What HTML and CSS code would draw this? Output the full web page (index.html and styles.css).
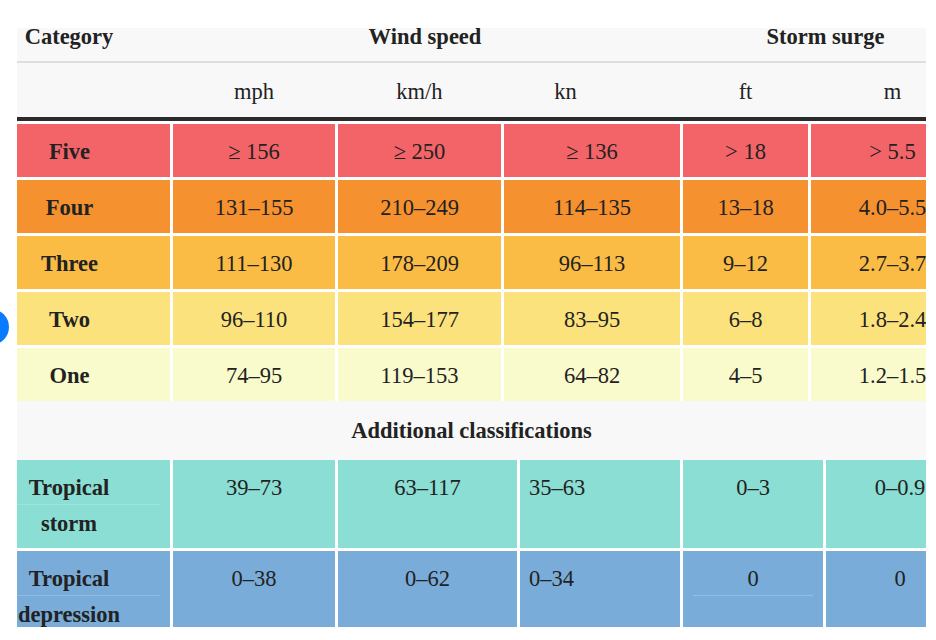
FILE: index.html
```html
<!DOCTYPE html>
<html>
<head>
<meta charset="utf-8">
<link rel="stylesheet" href="styles.css">
</head>
<body>
<div class="dot"></div>
<div class="viewport">
  <div class="table">
    <div class="hrow1">
      <div class="h1cat">Category</div>
      <div class="h1wind">Wind speed</div>
      <div class="h1surge">Storm surge</div>
    </div>
    <div class="hrow2">
      <div></div>
      <div>mph</div>
      <div>km/h</div>
      <div class="kn">kn</div>
      <div>ft</div>
      <div>m</div>
    </div>
    <div class="body">
      <div class="row c5">
        <div class="cat">Five</div><div>≥ 156</div><div>≥ 250</div><div>≥ 136</div><div>&gt; 18</div><div>&gt; 5.5</div>
      </div>
      <div class="row c4">
        <div class="cat">Four</div><div>131–155</div><div>210–249</div><div>114–135</div><div>13–18</div><div>4.0–5.5</div>
      </div>
      <div class="row c3">
        <div class="cat">Three</div><div>111–130</div><div>178–209</div><div>96–113</div><div>9–12</div><div>2.7–3.7</div>
      </div>
      <div class="row c2">
        <div class="cat">Two</div><div>96–110</div><div>154–177</div><div>83–95</div><div>6–8</div><div>1.8–2.4</div>
      </div>
      <div class="row c1">
        <div class="cat">One</div><div>74–95</div><div>119–153</div><div>64–82</div><div>4–5</div><div>1.2–1.5</div>
      </div>
    </div>
    <div class="addl">Additional classifications</div>
    <div class="trop">
      <div class="trow ts">
        <div class="tcat"><span>Tropical storm</span></div><div>39–73</div><div>63–117</div><div class="left">35–63</div><div>0–3</div><div>0–0.9</div>
      </div>
      <div class="trow td">
        <div class="tcat"><span>Tropical depression</span></div><div>0–38</div><div>0–62</div><div class="left">0–34</div><div class="ftline">0</div><div>0</div>
      </div>
    </div>
  </div>
</div>
</body>
</html>
```

FILE: styles.css
```css
html, body {
  margin: 0;
  padding: 0;
  background: #ffffff;
}

body {
  font-family: "Liberation Serif", "Tinos", "Times New Roman", Times, "DejaVu Serif", serif;
  font-size: 22.5px;
  color: #222222;
  position: relative;
  height: 640px;
  overflow: hidden;
}

.dot {
  position: absolute;
  left: -27px;
  top: 309px;
  width: 36px;
  height: 36px;
  border-radius: 50%;
  background: #0a7bff;
}

.viewport {
  margin-left: 17px;
  padding-top: 28px;
  width: 909px;
  overflow: hidden;
}

.table {
  width: 957px;
}

.hrow1 {
  display: grid;
  grid-template-columns: 153px 507px 297px;
  height: 33px;
  background: #f8f8f8;
  border-bottom: 2px solid #dedede;
  font-weight: bold;
  line-height: 17px;
  width: 909px;
}

.hrow1 > div {
  text-align: center;
}

.h1cat {
  padding-right: 49px;
}

.h1wind {
  padding-left: 3px;
}

.hrow2 {
  display: grid;
  grid-template-columns: 153px 162px 163px 176px 125px 163px;
  column-gap: 3px;
  height: 58px;
  box-sizing: border-box;
  padding-top: 4px;
  line-height: 50px;
  background: #f8f8f8;
  border-bottom: 4px solid #2b2b2b;
  text-align: center;
}

.hrow2 .kn {
  padding-right: 53px;
}

.body {
  display: flex;
  flex-direction: column;
  gap: 3px;
  padding-top: 3px;
}

.row {
  display: grid;
  grid-template-columns: 153px 162px 163px 176px 125px 163px;
  column-gap: 3px;
  height: 53px;
}

.row > div {
  box-sizing: border-box;
  height: 53px;
  padding-top: 2px;
  line-height: 51px;
  text-align: center;
}

.row > .cat {
  font-weight: bold;
  padding-right: 48px;
}

.c5 > div { background: #f36469; }
.c4 > div { background: #f5912f; }
.c3 > div { background: #fbbc45; }
.c2 > div { background: #fbe27c; }
.c1 > div { background: #fafbcd; }

.addl {
  width: 909px;
  height: 59px;
  box-sizing: border-box;
  padding-top: 1px;
  line-height: 58px;
  background: #f8f8f8;
  text-align: center;
  font-weight: bold;
}

.trop {
  display: flex;
  flex-direction: column;
  gap: 3px;
}

.trow {
  display: grid;
  grid-template-columns: 153px 162px 179px 160px 140px 148px;
  column-gap: 3px;
}

.ts { height: 88px; }
.td { height: 76px; }

.trow > div {
  box-sizing: border-box;
  padding-top: 10px;
  line-height: 36px;
  text-align: center;
}

.ts > div { background-color: #8bded4; }
.td > div { background-color: #79acd8; }

.trow > .left {
  text-align: left;
  padding-left: 9px;
}

.tcat {
  font-weight: bold;
  padding-right: 48px;
  background-image: linear-gradient(to bottom, transparent 44px, rgba(255, 255, 255, 0.18) 44px, rgba(255, 255, 255, 0.18) 45px, transparent 45px);
  background-size: 143px 100%;
  background-repeat: no-repeat;
}

.tcat span {
  display: block;
  width: 104px;
}

.ftline {
  background-image: linear-gradient(to bottom, transparent 44px, rgba(255, 255, 255, 0.2) 44px, rgba(255, 255, 255, 0.2) 45px, transparent 45px);
  background-size: 120px 100%;
  background-position: 10px 0;
  background-repeat: no-repeat;
}
```
